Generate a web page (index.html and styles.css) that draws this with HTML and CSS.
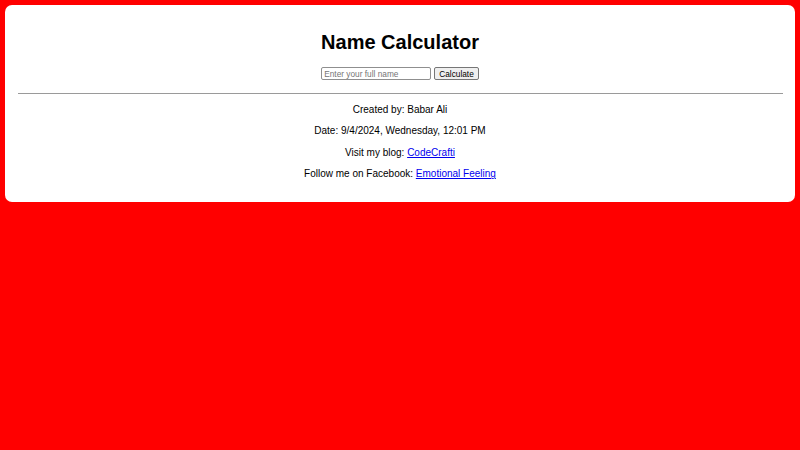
FILE: index.html
```html
<!DOCTYPE html>
<html>
<head>
    <title>Name Calculator</title>
    <link rel="stylesheet" href="styles.css">
</head>
<body>
    <div class="card">
        <h1>Name Calculator</h1>

        <div class="calc-row">
            <input type="text" id="fullName" class="name-input" placeholder="Enter your full name">
            <button class="btn" onclick="calculate()">Calculate</button>
        </div>
        <p id="result" class="result"></p>

        <hr>

        <p>Created by: Babar Ali</p>
        <p>Date: 9/4/2024, Wednesday, 12:01 PM</p>
        <p>Visit my blog: <a href="#">CodeCrafti</a></p>
        <p>Follow me on Facebook: <a href="#">Emotional Feeling</a></p>
    </div>

    <script>
        function calculate() {
            const name = document.getElementById('fullName').value.trim();
            const letters = name.replace(/\s+/g, '').length;
            document.getElementById('result').textContent = name ? `Letters in your name: ${letters}` : '';
        }
    </script>
</body>
</html>
```

FILE: styles.css
```css
body {
    font-family: "Liberation Sans", Arial, sans-serif;
    font-size: 10px;
    margin: 5px;
    padding: 0;
    background-color: #ff0000;
}
.card {
    background-color: #fff;
    border-radius: 7px;
    padding: 12.5px;
    text-align: center;
}
h1 {
    font-size: 20px;
    margin: 13.4px 0;
    color: #000;
}
.calc-row {
    display: flex;
    justify-content: center;
    align-items: center;
    gap: 3px;
}
.name-input {
    width: 110px;
    height: 13px;
    box-sizing: border-box;
    font-family: "Liberation Sans", Arial, sans-serif;
    font-size: 8.3px;
    padding: 0 2px;
    border: 1px solid #8f8f8f;
    border-radius: 2px;
}
.btn {
    height: 13px;
    box-sizing: border-box;
    font-family: "Liberation Sans", Arial, sans-serif;
    font-size: 8.3px;
    padding: 0 4px;
    color: #000;
    background-color: #efefef;
    border: 1px solid #767676;
    border-radius: 2px;
}
.result {
    margin: 0;
    min-height: 12.5px;
}
hr {
    border: none;
    border-top: 1px solid #9a9a9a;
    margin: 0 0 5px;
}
p {
    margin: 10px 0;
    line-height: 11.5px;
}
a {
    color: #0000ee;
}
```
